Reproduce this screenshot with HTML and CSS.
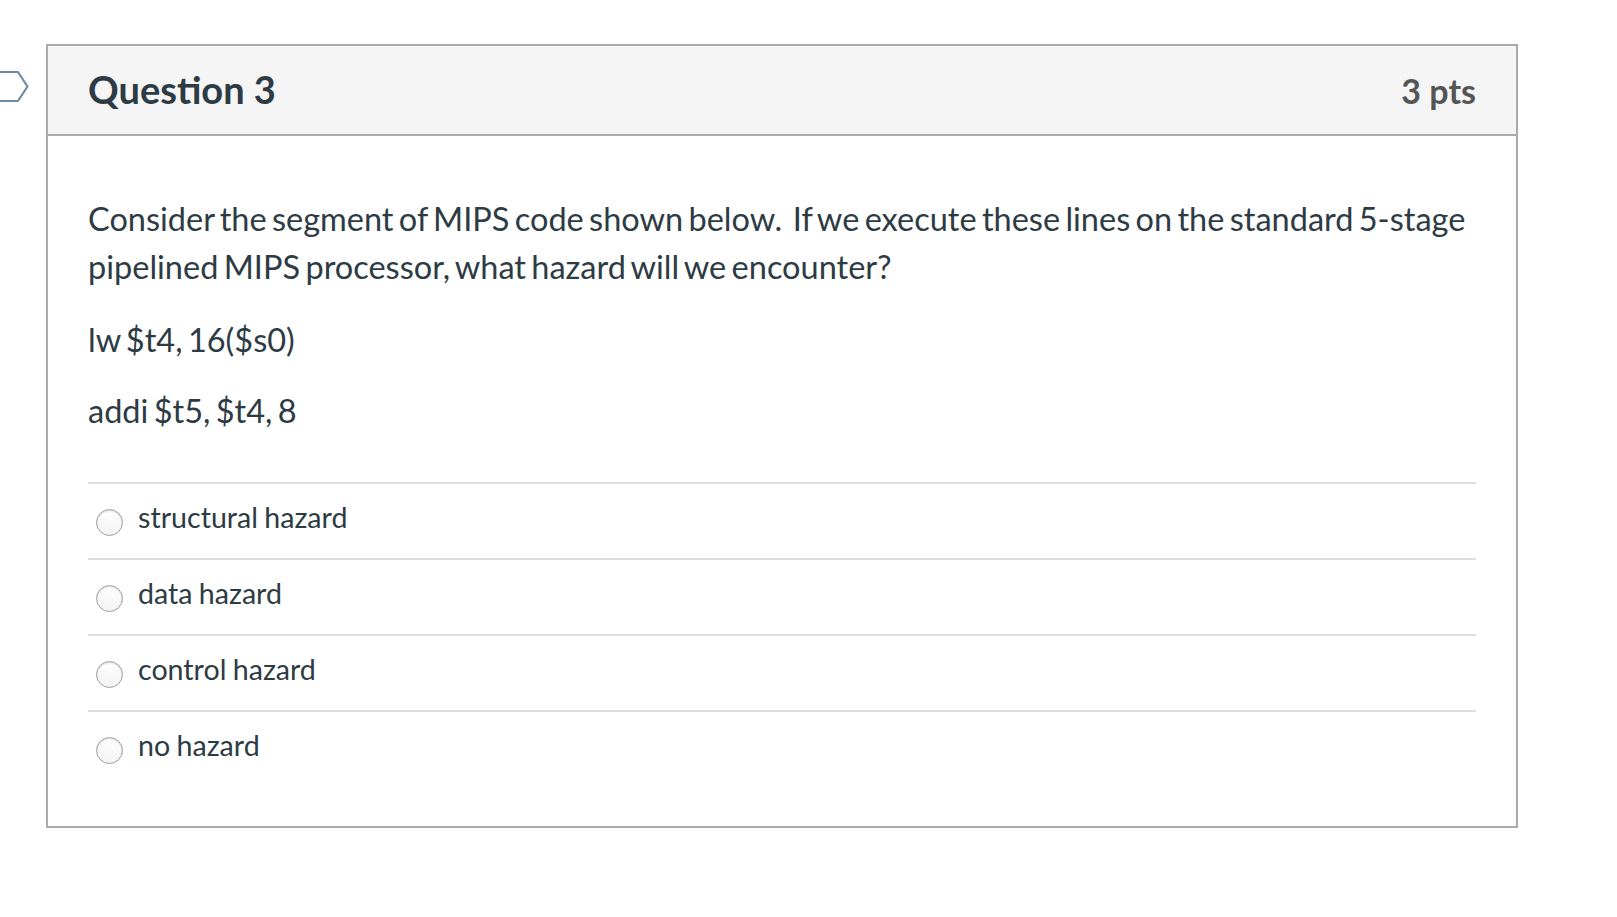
FILE: index.html
```html
<!DOCTYPE html>
<html lang="en">
<head>
<meta charset="utf-8">
<title>Question 3</title>
<link rel="stylesheet" href="styles.css">
</head>
<body>
<div class="page">
  <svg class="flag" width="30" height="34" viewBox="0 0 30 34" aria-hidden="true">
    <path d="M-4 2 H18 L27.5 16.5 L18 31 H-4" fill="none" stroke="#6d8aa6" stroke-width="2.2" stroke-linejoin="round"/>
  </svg>
  <div class="question">
    <div class="q-header">
      <span class="q-name">Question 3</span>
      <span class="q-points">3 pts</span>
    </div>
    <div class="q-body">
      <p class="q-text">Consider the segment of MIPS code shown below.&nbsp; If we execute these lines on the standard 5-stage pipelined MIPS processor, what hazard will we encounter?</p>
      <p class="q-text code">lw $t4, 16($s0)</p>
      <p class="q-text last">addi $t5, $t4, 8</p>
      <div class="answers">
        <label class="answer"><span class="radio"></span><span class="a-text">structural hazard</span></label>
        <label class="answer"><span class="radio"></span><span class="a-text">data hazard</span></label>
        <label class="answer"><span class="radio"></span><span class="a-text">control hazard</span></label>
        <label class="answer"><span class="radio"></span><span class="a-text">no hazard</span></label>
      </div>
    </div>
  </div>
</div>
</body>
</html>
```

FILE: styles.css
```css
html, body {
  margin: 0;
  padding: 0;
  background: #ffffff;
}

body {
  font-family: Lato, "Open Sans", "Liberation Sans", sans-serif;
  color: #2d3b45;
}

.page {
  position: relative;
  padding: 44px 0 0 46px;
}

.flag {
  position: absolute;
  left: 0;
  top: 70px;
}

.question {
  width: 1468px;
  border: 2px solid #aaaaaa;
}

.q-header {
  display: flex;
  justify-content: space-between;
  align-items: baseline;
  background: #f5f5f5;
  border-bottom: 2px solid #aaaaaa;
  padding: 20px 40px 22px;
  height: 46px;
}

.q-name {
  font-size: 38px;
  font-weight: 700;
  line-height: 46px;
  color: #2d3b45;
}

.q-points {
  font-size: 34px;
  font-weight: 700;
  line-height: 46px;
  color: #555555;
}

.q-body {
  padding: 59px 40px 40px;
}

.q-text {
  margin: 0 0 25px;
  font-size: 32.5px;
  line-height: 48px;
  word-spacing: -3px;
}

.q-text.code {
  margin-bottom: 23px;
}

.q-text.last {
  margin-bottom: 47px;
}

.answers {
  display: flex;
  flex-direction: column;
}

.answer {
  display: flex;
  align-items: center;
  height: 74px;
  border-top: 2px solid #dddddd;
}

.radio {
  flex: none;
  box-sizing: border-box;
  width: 27px;
  height: 27px;
  margin: 2px 15px 0 8px;
  border-radius: 50%;
  border: 1px solid #9f9f9f;
  background: linear-gradient(#ffffff, #f3f3f3);
  box-shadow: inset 0 1px 2px rgba(0, 0, 0, 0.15);
}

.a-text {
  font-size: 28.6px;
  line-height: 40px;
  margin-bottom: 8px;
  word-spacing: -1px;
  color: #2d3b45;
}
```
